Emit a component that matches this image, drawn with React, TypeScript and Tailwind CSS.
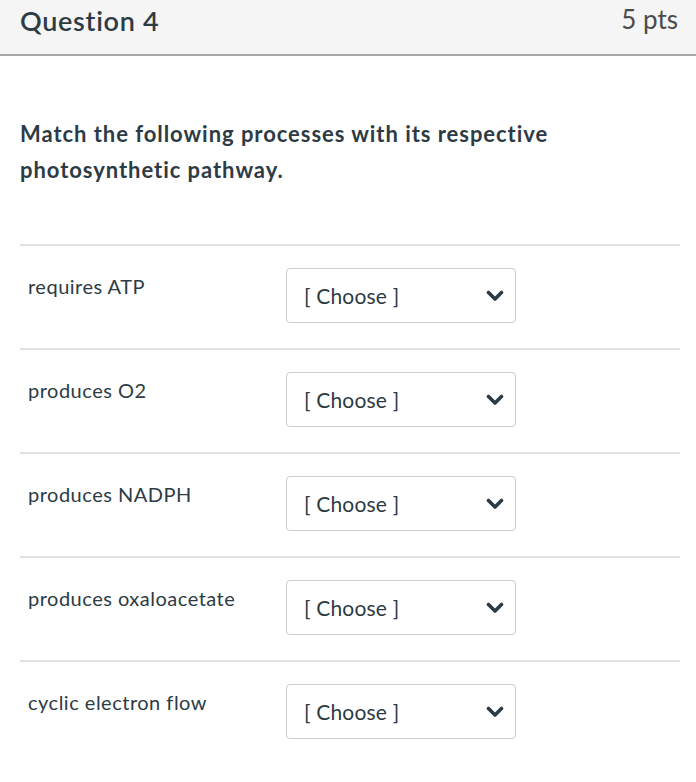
const rows = [
  'requires ATP',
  'produces O2',
  'produces NADPH',
  'produces oxaloacetate',
  'cyclic electron flow',
];

const Chevron = () => (
  <svg width="18" height="12" viewBox="0 0 18 12" fill="none" className="shrink-0">
    <path d="M2.5 2.5L9 9L15.5 2.5" stroke="#2d3b45" strokeWidth="3.6" strokeLinecap="round" strokeLinejoin="round" />
  </svg>
);

const ChooseSelect = () => (
  <div className="flex h-[55px] w-[230px] items-center justify-between rounded-[4px] border-[1.5px] border-[#c7cdd1] bg-white pl-[17px] pr-[11px]">
    <span className="text-[21px] leading-[24px] tracking-[0.2px] text-[#2d3b45]">[ Choose ]</span>
    <Chevron />
  </div>
);

export default function App() {
  return (
    <div className="min-h-[782px] w-[696px] bg-white text-[#2d3b45]" style={{ fontFamily: 'Lato, "Open Sans", sans-serif' }}>
      <header className="flex h-[56px] justify-between border-b-2 border-[#a8a8a8] bg-[#f5f5f5] pl-5 pr-[18px]">
        <h2 className="pt-[5px] text-[27px] font-semibold leading-[32px] tracking-[0.7px]">Question 4</h2>
        <span className="pt-[4px] text-[26px] leading-[30px] text-[#4b4b4b]">5 pts</span>
      </header>

      <div className="pl-5 pr-4">
        <p className="mt-[60px] text-[22px] font-bold leading-[36px] tracking-[0.95px]">
          Match the following processes with its respective
          <br />
          photosynthetic pathway.
        </p>

        <div className="mt-[56px]">
          {rows.map((label) => (
            <div key={label} className="flex items-start border-t-2 border-[#e0e0e0] pb-[25px] pl-2 pt-[22px]">
              <div className="w-[258px] pt-[4px] text-[20px] leading-[28px] tracking-[0.5px]">{label}</div>
              <ChooseSelect />
            </div>
          ))}
        </div>
      </div>
    </div>
  );
}
